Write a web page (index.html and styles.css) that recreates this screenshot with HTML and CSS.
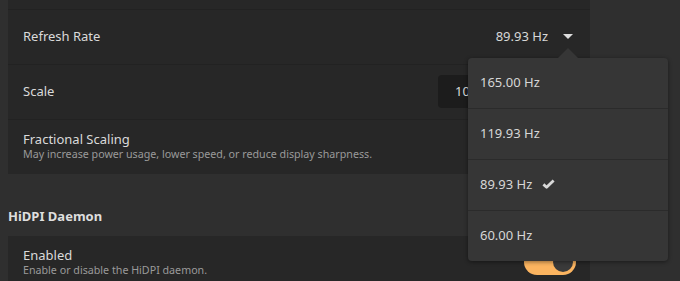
FILE: index.html
```html
<!DOCTYPE html>
<html>
<head>
<meta charset="utf-8">
<link rel="stylesheet" href="styles.css">
</head>
<body>
<div class="page">
  <div class="card">
    <div class="row row-stub"></div>
    <div class="row">
      <div class="label"><div class="title">Refresh Rate</div></div>
      <div class="control">
        <span class="value">89.93 Hz</span>
        <svg class="caret" width="10" height="5" viewBox="0 0 10 5"><path d="M0 0H10L5 5Z" fill="#dedede"/></svg>
      </div>
    </div>
    <div class="row">
      <div class="label"><div class="title">Scale</div></div>
      <div class="control">
        <div class="spin"><span class="spin-text">100%</span></div>
      </div>
    </div>
    <div class="row row-last">
      <div class="label">
        <div class="title">Fractional Scaling</div>
        <div class="sub">May increase power usage, lower speed, or reduce display sharpness.</div>
      </div>
      <div class="control">
        <div class="switch off"><div class="knob"></div></div>
      </div>
    </div>
  </div>

  <h2 class="heading">HiDPI Daemon</h2>

  <div class="card">
    <div class="row">
      <div class="label">
        <div class="title">Enabled</div>
        <div class="sub">Enable or disable the HiDPI daemon.</div>
      </div>
      <div class="control">
        <div class="switch on"><div class="knob"></div></div>
      </div>
    </div>
  </div>
</div>

<div class="popover">
  <div class="pointer"></div>
  <div class="item">165.00 Hz</div>
  <div class="item">119.93 Hz</div>
  <div class="item">89.93 Hz
    <svg class="check" width="13" height="10" viewBox="0 0 13 10"><path d="M1.4 5.4L4.6 8.2L11.6 1.4" fill="none" stroke="#d8d8d8" stroke-width="2.8" stroke-linejoin="round"/></svg>
  </div>
  <div class="item">60.00 Hz</div>
</div>
</body>
</html>
```
FILE: styles.css
```css
html, body {
  margin: 0;
  padding: 0;
  background: #2f2f2f;
  width: 680px;
  height: 281px;
  overflow: hidden;
  font-family: "Noto Sans", "Open Sans", sans-serif;
  color: #dcdcdc;
}

.page {
  padding-left: 8px;
  width: 582px;
}

.card {
  background: #272727;
}

.row {
  display: flex;
  align-items: center;
  justify-content: space-between;
  padding: 0 14px 2px 15px;
  box-sizing: border-box;
  height: 55px;
  border-bottom: 1px solid #222222;
}

.row-stub {
  height: 10px;
  padding: 0;
}

.row-last {
  border-bottom: none;
  height: 54px;
}

.title {
  font-size: 13px;
  line-height: 16px;
  color: #dadada;
}

.sub {
  font-size: 10.7px;
  line-height: 15px;
  color: #9a9a9a;
}

.control {
  display: flex;
  align-items: center;
}

.value {
  font-size: 13px;
  color: #d8d8d8;
}

.caret {
  margin-left: 15px;
  margin-right: 3px;
}

.spin {
  width: 138px;
  height: 33px;
  background: #1c1c1c;
  border-radius: 4px;
  display: flex;
  align-items: center;
  padding-left: 17px;
  box-sizing: border-box;
  font-size: 13px;
  color: #d8d8d8;
}

.switch {
  width: 52px;
  height: 26px;
  border-radius: 13px;
  box-sizing: border-box;
  display: flex;
  align-items: center;
  padding: 0 3px;
}

.switch.on {
  background: #fbb460;
  justify-content: flex-end;
}

.switch.off {
  background: #1c1c1c;
}

.knob {
  width: 20px;
  height: 20px;
  border-radius: 50%;
  background: #3a3a3a;
}

.heading {
  margin: 0;
  padding: 32px 0 10px 0;
  font-size: 13px;
  line-height: 20px;
  font-weight: bold;
  color: #dedede;
}

.popover {
  position: absolute;
  left: 468px;
  top: 58px;
  width: 200px;
  background: #363636;
  border-radius: 4px;
  box-shadow: 0 1px 4px rgba(0, 0, 0, 0.45);
}

.pointer {
  position: absolute;
  left: 90px;
  top: -10px;
  width: 0;
  height: 0;
  border-left: 10px solid transparent;
  border-right: 10px solid transparent;
  border-bottom: 10px solid #363636;
}

.item {
  box-sizing: border-box;
  display: flex;
  align-items: center;
  padding: 0 0 2px 12px;
  font-size: 13px;
  color: #d6d6d6;
  border-bottom: 1px solid #2b2b2b;
  height: 51px;
}

.item:last-child {
  border-bottom: none;
  height: 50px;
}

.check {
  margin-left: 10px;
}
```
